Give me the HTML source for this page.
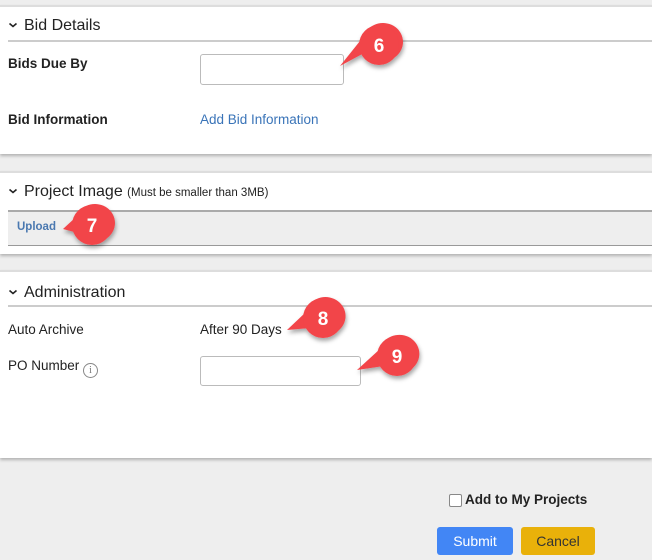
<!DOCTYPE html>
<html><head><meta charset="utf-8"><style>
*{box-sizing:border-box;margin:0;padding:0}
body{width:652px;height:560px;background:#eeeeee;font-family:"Liberation Sans",Arial,sans-serif;position:relative;overflow:hidden;color:#222}
.panel{position:absolute;left:0;width:652px;background:#fff;border-top:2px solid #ddd;box-shadow:0 2px 3px rgba(0,0,0,.25)}
.h{position:absolute;left:8px;right:0;font-size:16px;color:#222}
.h .c{display:inline-block;width:16px;vertical-align:2px}
.line{position:absolute;left:8px;right:0;height:2px;background:#ccc}
.t{position:absolute;font-size:13.5px}
.inp{position:absolute;border:1px solid #bbb;border-radius:3px;background:#fff}
svg.b{position:absolute;overflow:visible}
</style></head><body>
<div class="panel" style="top:5px;height:149px"></div>
<div class="h" style="top:15px"><span class="c"><svg width="10" height="6"><path d="M1.5 1.5 L5 4.5 L8.5 1.5" stroke="#222" stroke-width="1.6" fill="none"/></svg></span>Bid Details</div>
<div class="line" style="top:40px"></div>
<div class="t" style="left:8px;top:56px;font-weight:bold">Bids Due By</div>
<div class="inp" style="left:200px;top:54px;width:144px;height:31px"></div>
<div class="t" style="left:8px;top:112px;font-weight:bold">Bid Information</div>
<div class="t" style="left:200px;top:112px;color:#3a74b8">Add Bid Information</div>

<div class="panel" style="top:171px;height:83px"></div>
<div class="h" style="top:181px"><span class="c"><svg width="10" height="6"><path d="M1.5 1.5 L5 4.5 L8.5 1.5" stroke="#222" stroke-width="1.6" fill="none"/></svg></span>Project Image <span style="font-size:11.5px">(Must be smaller than 3MB)</span></div>
<div style="position:absolute;left:8px;right:0;top:210px;height:36px;background:#eee;border-top:2px solid #aaa;border-bottom:1px solid #999"></div>
<div class="t" style="left:17px;top:221px;font-size:11.5px;font-weight:bold;color:#4a78b0">Upload</div>

<div class="panel" style="top:270px;height:188px"></div>
<div class="h" style="top:282px"><span class="c"><svg width="10" height="6"><path d="M1.5 1.5 L5 4.5 L8.5 1.5" stroke="#222" stroke-width="1.6" fill="none"/></svg></span>Administration</div>
<div class="line" style="top:305px"></div>
<div class="t" style="left:8px;top:322px">Auto Archive</div>
<div class="t" style="left:200px;top:322px">After 90 Days</div>
<div class="t" style="left:8px;top:358px">PO Number <span style="display:inline-block;width:15px;height:15px;border:1px solid #888;border-radius:50%;font-size:10px;text-align:center;line-height:13px;color:#777;vertical-align:-3px;font-family:'Liberation Serif',serif">i</span></div>
<div class="inp" style="left:200px;top:356px;width:161px;height:30px"></div>

<div style="position:absolute;left:449px;top:494px;width:13px;height:13px;border:1px solid #888;border-radius:2px;background:#fff"></div>
<div class="t" style="left:465px;top:492px;font-weight:bold">Add to My Projects</div>
<div style="position:absolute;left:437px;top:527px;width:76px;height:28px;background:#4286f5;border-radius:3px;color:#fff;font-size:14px;text-align:center;line-height:28px">Submit</div>
<div style="position:absolute;left:521px;top:527px;width:74px;height:28px;background:#e9b10a;border-radius:3px;color:#333;font-size:14px;text-align:center;line-height:28px">Cancel</div>

<svg class="b" style="left:0;top:0" width="652" height="560">
<defs><filter id="s" x="-50%" y="-50%" width="200%" height="200%"><feDropShadow dx="1" dy="3" stdDeviation="2" flood-opacity=".35"/></filter></defs>
<g fill="#f2444a" filter="url(#s)">
<path d="M340 66 L366 52 A20 19 0 1 0 364 36 Z"/><circle cx="379" cy="45" r="20"/>
<path d="M63 229 L78 233 A20 19 0 1 0 76 217 Z"/><circle cx="92" cy="225" r="20"/>
<path d="M287 330 L310 328 A20 19 0 1 0 306 312 Z"/><circle cx="323" cy="318" r="20"/>
<path d="M357 370 L384 366 A20 19 0 1 0 380 349 Z"/><circle cx="397" cy="356" r="20"/>
</g>
<g fill="#fff" font-family="Liberation Sans,Arial,sans-serif" font-size="19" font-weight="bold" text-anchor="middle">
<text x="379" y="52">6</text><text x="92" y="232">7</text><text x="323" y="325">8</text><text x="397" y="363">9</text>
</g>
</svg>
</body></html>
